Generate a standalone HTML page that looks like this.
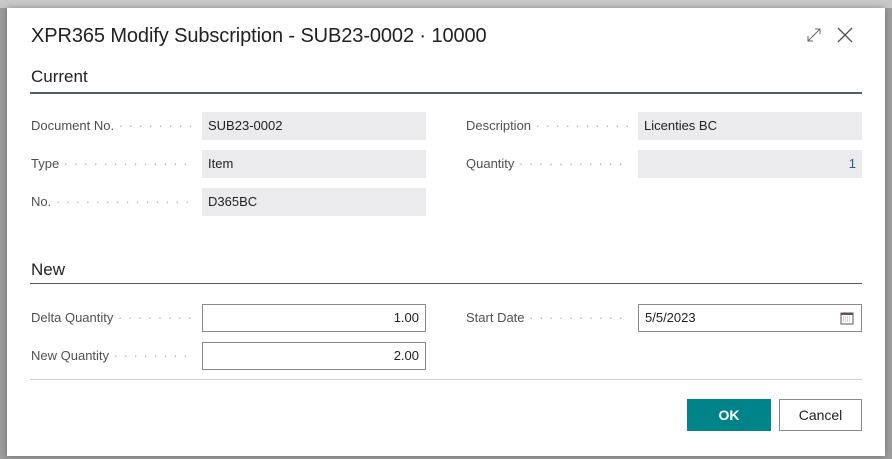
<!DOCTYPE html>
<html><head><style>
*{margin:0;padding:0;box-sizing:border-box}
body{width:892px;height:459px;overflow:hidden;background:#9c9c9c;font-family:"Liberation Sans",sans-serif;position:relative}
.bg{position:absolute;left:0;top:0;width:892px;height:8px;background:#c8c8c8}
.dlg{position:absolute;left:7px;top:8px;width:878px;height:448px;background:#fff;box-shadow:0 0 6px rgba(0,0,0,.3)}
.a{position:absolute;white-space:nowrap}
.title{left:24px;top:17px;font-size:20px;color:#212121;letter-spacing:-0.1px}
.sec{font-size:17px;color:#212121;left:24px}
.line{position:absolute;left:23px;width:832px;height:2px;background:#4f5b6a}
.sep{position:absolute;left:23px;width:832px;height:1px;background:#d0d0d0;top:371px}
.lbl{font-size:13px;color:#505050;height:28px;line-height:28px;width:163px;overflow:hidden}
.lbl:after{content:" · · · · · · · · · · · · · · · · · · · · · ·";color:#b0b0b0;letter-spacing:1px}
.f{position:absolute;width:224px;height:28px;line-height:28px;font-size:13px;color:#212121;padding:0 6px;background:#ebebed}
.i{background:#fff;border:1px solid #8a8a8a;line-height:26px}
.r{text-align:right}
.btn{position:absolute;top:391px;height:32px;line-height:32px;text-align:center;font-size:14px}
</style></head><body>
<div class="bg"></div>
<div class="dlg">
<div class="a title">XPR365 Modify Subscription - SUB23-0002 · 10000</div>
<svg class="a" style="left:799px;top:19px" width="16" height="16" viewBox="0 0 16 16"><path d="M2 14L14 2M9 2h5v5M2 9v5h5" fill="none" stroke="#666" stroke-width="1"/></svg>
<svg class="a" style="left:829px;top:18px" width="18" height="18" viewBox="0 0 18 18"><path d="M2 2L16 16M16 2L2 16" fill="none" stroke="#555" stroke-width="1.4"/></svg>
<div class="a sec" style="top:59px">Current</div>
<div class="line" style="top:84px"></div>
<div class="a lbl" style="left:24px;top:104px">Document No.</div>
<div class="f" style="left:195px;top:104px">SUB23-0002</div>
<div class="a lbl" style="left:24px;top:142px">Type</div>
<div class="f" style="left:195px;top:142px">Item</div>
<div class="a lbl" style="left:24px;top:180px">No.</div>
<div class="f" style="left:195px;top:180px">D365BC</div>
<div class="a lbl" style="left:459px;top:104px">Description</div>
<div class="f" style="left:631px;top:104px">Licenties BC</div>
<div class="a lbl" style="left:459px;top:142px">Quantity</div>
<div class="f r" style="left:631px;top:142px;color:#2a5a8a">1</div>
<div class="a sec" style="top:252px">New</div>
<div class="line" style="top:275px;height:1px"></div>
<div class="a lbl" style="left:24px;top:296px">Delta Quantity</div>
<div class="f i r" style="left:195px;top:296px">1.00</div>
<div class="a lbl" style="left:24px;top:334px">New Quantity</div>
<div class="f i r" style="left:195px;top:334px">2.00</div>
<div class="a lbl" style="left:459px;top:296px">Start Date</div>
<div class="f i" style="left:631px;top:296px">5/5/2023
<svg style="position:absolute;right:7px;top:6px" width="14" height="14" viewBox="0 0 14 14"><rect x="1" y="2" width="12" height="11" fill="#fff" stroke="#555"/><rect x="1" y="2" width="12" height="2" fill="#555"/><path d="M3 6h8M3 8h8M3 10h8" stroke="#c99" stroke-dasharray="1 1"/></svg></div>
<div class="sep"></div>
<div class="btn" style="left:680px;width:84px;background:#008489;color:#fff;font-weight:bold">OK</div>
<div class="btn" style="left:772px;width:83px;border:1px solid #8a8a8a;line-height:30px;color:#212121">Cancel</div>
</div>
</body></html>
